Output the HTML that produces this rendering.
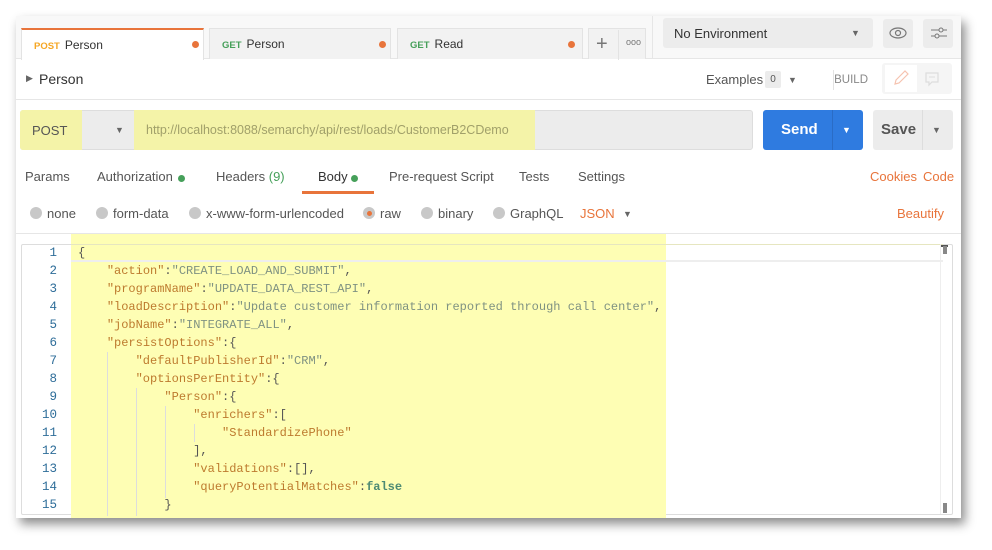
<!DOCTYPE html>
<html><head><meta charset="utf-8"><style>
*{box-sizing:border-box;margin:0;padding:0}
body{width:992px;height:550px;background:#fff;font-family:"Liberation Sans",sans-serif;position:relative;overflow:hidden}
.win{position:absolute;left:16px;top:16px;width:945px;height:502px;background:#fff;box-shadow:4px 6px 10px rgba(0,0,0,.45)}
.a{position:absolute}
.tabbar{left:0;top:0;width:945px;height:43px;background:#f8f8f8;border-bottom:1px solid #e6e6e6}
.tab{top:12px;height:31px;background:#f2f2f2;border:1px solid #e3e3e3;border-bottom:none;font-size:12px;color:#333;line-height:31px;padding-left:12px}
.tab b{font-size:9.5px;font-weight:bold;margin-right:5px}
.dot{position:absolute;width:7px;height:7px;border-radius:50%;background:#e8743b}
.t{position:absolute;font-size:12.5px;color:#555;white-space:nowrap}
.code{font-family:"Liberation Mono",monospace;font-size:12px;position:absolute;white-space:pre;line-height:18px}
.k{color:#bd7a2e}.s{color:#7f9282}.p{color:#555}.b{color:#4d8a73;font-weight:bold}
.ln{color:#2e6d99;text-align:right;width:36px;font-family:"Liberation Mono",monospace;font-size:12.5px;line-height:18px;position:absolute;left:21px;top:244px;white-space:pre}
.radio{position:absolute;width:12px;height:12px;border-radius:50%;background:#c8c8c8;top:207px}
.g{position:absolute;width:1px;background:#ddd}
</style></head><body>
<div class="win">
<div class="a tabbar"></div>
<div class="a tab" style="left:5px;width:183px;background:#fff;border-top:2px solid #e8743b;top:12px;height:32px"><b style="color:#f5a623">POST</b>Person</div>
<div class="dot" style="left:176px;top:25px"></div>
<div class="a tab" style="left:193px;width:182px"><b style="color:#46a05a">GET</b>Person</div>
<div class="dot" style="left:363px;top:25px"></div>
<div class="a tab" style="left:381px;width:186px"><b style="color:#46a05a">GET</b>Read</div>
<div class="dot" style="left:552px;top:25px"></div>
<div class="a tab" style="left:572px;width:58px;padding:0"></div>
<div class="t" style="left:580px;top:17px;font-size:20px;color:#777">+</div>
<div class="a" style="left:602px;top:14px;width:1px;height:30px;background:#e3e3e3"></div>
<div class="t" style="left:610px;top:21px;font-size:9px;color:#777">ooo</div>
<div class="a" style="left:636px;top:0;width:1px;height:43px;background:#e6e6e6"></div>
<div class="a" style="left:647px;top:2px;width:210px;height:30px;background:#ececec;border-radius:3px"></div>
<div class="t" style="left:658px;top:10px;font-size:13px;color:#333">No Environment</div>
<div class="t" style="left:835px;top:12px;font-size:9px;color:#666">▼</div>
<div class="a" style="left:867px;top:3px;width:30px;height:29px;background:#ececec;border-radius:3px"></div>
<svg class="a" style="left:872px;top:10px" width="20" height="14"><ellipse cx="10" cy="7" rx="8" ry="5" fill="none" stroke="#777" stroke-width="1.2"/><circle cx="10" cy="7" r="2.5" fill="none" stroke="#777" stroke-width="1.2"/></svg>
<div class="a" style="left:907px;top:3px;width:30px;height:29px;background:#ececec;border-radius:3px"></div>
<svg class="a" style="left:913px;top:8px" width="20" height="18"><path d="M2 6h16M2 12h16" stroke="#777" stroke-width="1"/><circle cx="12" cy="6" r="2" fill="#ececec" stroke="#777"/><circle cx="8" cy="12" r="2" fill="#ececec" stroke="#777"/></svg>

<div class="t" style="left:10px;top:57px;font-size:9px;color:#666">▶</div>
<div class="t" style="left:23px;top:55px;font-size:14px;color:#333">Person</div>
<div class="t" style="left:690px;top:56px;font-size:13px">Examples</div>
<div class="a" style="left:749px;top:55px;width:16px;height:17px;background:#ececec;border-radius:2px;font-size:10px;color:#555;text-align:center;line-height:17px">0</div>
<div class="t" style="left:772px;top:59px;font-size:9px;color:#666">▼</div>
<div class="a" style="left:817px;top:54px;width:1px;height:20px;background:#e3e3e3"></div>
<div class="t" style="left:818px;top:58px;font-size:11.5px;color:#888;width:34px;text-align:right">BUILD</div>
<div class="a" style="left:866px;top:47px;width:70px;height:31px;background:#f5f5f5;border-radius:3px"></div>
<div class="a" style="left:869px;top:49px;width:32px;height:27px;background:#fff"></div>
<svg class="a" style="left:876px;top:53px" width="18" height="18"><path d="M3 15l1-4L13 2l3 3-9 9z" fill="none" stroke="#f6c3b0" stroke-width="1.2"/></svg>
<svg class="a" style="left:908px;top:55px" width="16" height="16"><path d="M2 2h12v9H8l-3 3v-3H2z" fill="none" stroke="#ddd" stroke-width="1.2"/><path d="M5 6h6" stroke="#ddd"/></svg>
<div class="a" style="left:0;top:83px;width:945px;height:1px;background:#e6e6e6"></div>

<div class="a" style="left:4px;top:94px;width:733px;height:40px;background:#ececec;border:1px solid #ddd;border-radius:3px"></div>
<div class="a" style="left:4px;top:94px;width:62px;height:40px;background:#f4f3a8;border-radius:3px 0 0 3px"></div>
<div class="a" style="left:118px;top:94px;width:401px;height:40px;background:#f4f3a8"></div>
<div class="t" style="left:16px;top:107px;font-size:13px;color:#555">POST</div>
<div class="t" style="left:99px;top:109px;font-size:9px;color:#666">▼</div>
<div class="t" style="left:130px;top:107px;font-size:12.5px;color:#a1a06a">http://localhost:8088/semarchy/api/rest/loads/CustomerB2CDemo</div>
<div class="a" style="left:747px;top:94px;width:100px;height:40px;background:#2f7be0;border-radius:3px"></div>
<div class="a" style="left:816px;top:94px;width:1px;height:40px;background:#2a6cc6"></div>
<div class="t" style="left:765px;top:105px;font-size:15px;color:#fff;font-weight:bold">Send</div>
<div class="t" style="left:826px;top:109px;font-size:9px;color:#fff">▼</div>
<div class="a" style="left:857px;top:94px;width:80px;height:40px;background:#ececec;border-radius:3px"></div>
<div class="a" style="left:906px;top:94px;width:1px;height:40px;background:#ddd"></div>
<div class="t" style="left:865px;top:105px;font-size:15px;color:#555;font-weight:bold">Save</div>
<div class="t" style="left:916px;top:109px;font-size:9px;color:#666">▼</div>

<div class="t" style="left:9px;top:153px;font-size:13px">Params</div>
<div class="t" style="left:81px;top:153px;font-size:13px">Authorization</div>
<div class="dot" style="left:162px;top:159px;background:#46a05a"></div>
<div class="t" style="left:200px;top:153px;font-size:13px">Headers <span style="color:#46a05a">(9)</span></div>
<div class="t" style="left:302px;top:153px;font-size:13px;color:#333">Body</div>
<div class="dot" style="left:335px;top:159px;background:#46a05a"></div>
<div class="a" style="left:286px;top:175px;width:72px;height:3px;background:#e8743b"></div>
<div class="t" style="left:373px;top:153px;font-size:13px">Pre-request Script</div>
<div class="t" style="left:503px;top:153px;font-size:13px">Tests</div>
<div class="t" style="left:562px;top:153px;font-size:13px">Settings</div>
<div class="t" style="left:854px;top:153px;font-size:13px;color:#e8743b">Cookies</div>
<div class="t" style="left:907px;top:153px;font-size:13px;color:#e8743b">Code</div>

<div class="radio" style="left:14px;top:191px"></div><div class="t" style="left:31px;top:190px;font-size:13px">none</div>
<div class="radio" style="left:80px;top:191px"></div><div class="t" style="left:97px;top:190px;font-size:13px">form-data</div>
<div class="radio" style="left:173px;top:191px"></div><div class="t" style="left:190px;top:190px;font-size:13px">x-www-form-urlencoded</div>
<div class="radio" style="left:347px;top:191px;background:#c8c8c8"></div><div class="a" style="left:351px;top:195px;width:5px;height:5px;border-radius:50%;background:#e8743b"></div><div class="t" style="left:364px;top:190px;font-size:13px">raw</div>
<div class="radio" style="left:405px;top:191px"></div><div class="t" style="left:422px;top:190px;font-size:13px">binary</div>
<div class="radio" style="left:477px;top:191px"></div><div class="t" style="left:494px;top:190px;font-size:13px">GraphQL</div>
<div class="t" style="left:564px;top:190px;font-size:13px;color:#e8743b">JSON</div>
<div class="t" style="left:607px;top:193px;font-size:9px;color:#666">▼</div>
<div class="t" style="left:881px;top:190px;font-size:13px;color:#e8743b">Beautify</div>
<div class="a" style="left:0;top:217px;width:945px;height:1px;background:#e6e6e6"></div>
</div>

<div class="a" style="left:21px;top:244px;width:932px;height:271px;border:1px solid #ddd;border-radius:2px;background:#fff"></div>
<div class="a" style="left:71px;top:234px;width:595px;height:284px;background:#fefeb4"></div>
<div class="a" style="left:71px;top:244px;width:872px;height:18px;border-top:1px solid #e6e6c0;border-bottom:2px solid #eee"></div>
<div class="a" style="left:940px;top:244px;width:10px;height:270px;border-left:1px solid #eee"></div>
<div class="a" style="left:941px;top:245px;width:7px;height:2px;background:#555"></div>
<div class="a" style="left:943px;top:246px;width:4px;height:8px;background:#888"></div>
<div class="a" style="left:943px;top:503px;width:4px;height:10px;background:#888"></div>
<div class="g" style="left:107px;top:352px;height:164px"></div>
<div class="g" style="left:136px;top:388px;height:128px"></div>
<div class="g" style="left:165px;top:406px;height:92px"></div>
<div class="g" style="left:194px;top:424px;height:18px"></div>
<div class="ln"> 1
 2
 3
 4
 5
 6
 7
 8
 9
10
11
12
13
14
15</div>
<div class="code" style="left:78px;top:244px"><span class="p">{</span>
    <span class="k">"action"</span><span class="p">:</span><span class="s">"CREATE_LOAD_AND_SUBMIT"</span><span class="p">,</span>
    <span class="k">"programName"</span><span class="p">:</span><span class="s">"UPDATE_DATA_REST_API"</span><span class="p">,</span>
    <span class="k">"loadDescription"</span><span class="p">:</span><span class="s">"Update customer information reported through call center"</span><span class="p">,</span>
    <span class="k">"jobName"</span><span class="p">:</span><span class="s">"INTEGRATE_ALL"</span><span class="p">,</span>
    <span class="k">"persistOptions"</span><span class="p">:{</span>
        <span class="k">"defaultPublisherId"</span><span class="p">:</span><span class="s">"CRM"</span><span class="p">,</span>
        <span class="k">"optionsPerEntity"</span><span class="p">:{</span>
            <span class="k">"Person"</span><span class="p">:{</span>
                <span class="k">"enrichers"</span><span class="p">:[</span>
                    <span class="k">"StandardizePhone"</span>
                <span class="p">],</span>
                <span class="k">"validations"</span><span class="p">:[],</span>
                <span class="k">"queryPotentialMatches"</span><span class="p">:</span><span class="b">false</span>
            <span class="p">}</span></div>
</body></html>
